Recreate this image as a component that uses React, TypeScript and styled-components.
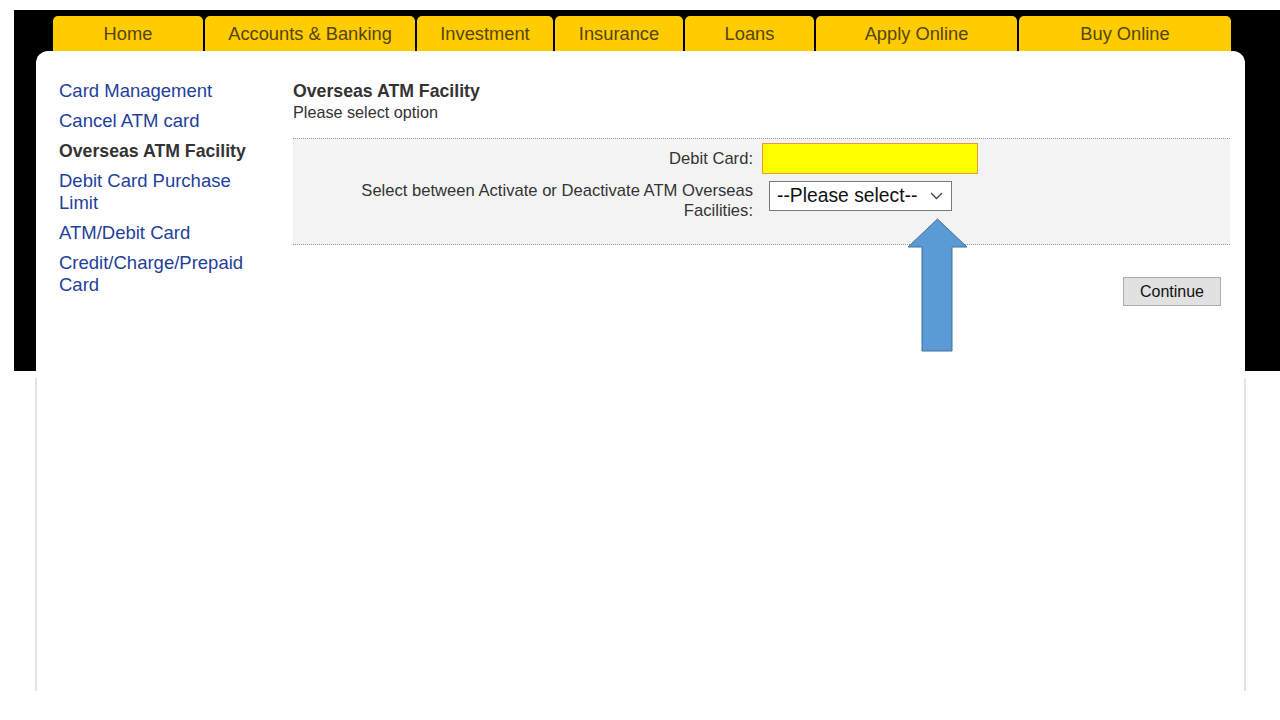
import React from "react";
import styled, { createGlobalStyle } from "styled-components";

const GlobalStyle = createGlobalStyle`
  html, body {
    margin: 0;
    padding: 0;
    background: #ffffff;
    font-family: "Liberation Sans", Arial, sans-serif;
  }
`;

const Page = styled.div`
  position: relative;
  width: 1280px;
  height: 720px;
  overflow: hidden;
  background: #ffffff;
`;

const Frame = styled.div`
  margin: 10px 0 0 14px;
  width: 1266px;
  height: 361px;
  background: #000000;
  box-sizing: border-box;
  padding-top: 6px;
  display: flex;
  flex-direction: column;
`;

const TabBar = styled.nav`
  margin-left: 39px;
  display: flex;
  gap: 2px;
  height: 35px;
`;

const Tab = styled.a<{ $w: number }>`
  width: ${(p) => p.$w}px;
  height: 35px;
  background: #ffcc00;
  border-radius: 5px 5px 0 0;
  display: flex;
  align-items: center;
  justify-content: center;
  color: #54450f;
  font-size: 18.3px;
  text-decoration: none;
  padding-top: 1px;
  box-sizing: border-box;
`;

const Panel = styled.div`
  margin-left: 22px;
  width: 1209px;
  flex: 1;
  background: #ffffff;
  border-radius: 12px 12px 0 0;
  box-sizing: border-box;
  padding: 29px 15px 0 23px;
  display: flex;
  gap: 34px;
`;

const Sidebar = styled.ul`
  list-style: none;
  margin: 0;
  padding: 0;
  width: 200px;
  flex: none;
  display: flex;
  flex-direction: column;
  gap: 8px;
`;

const SideItem = styled.li<{ $active?: boolean }>`
  font-size: ${(p) => (p.$active ? "17.7px" : "18.5px")};
  line-height: 22px;
  font-weight: ${(p) => (p.$active ? 700 : 400)};
  color: ${(p) => (p.$active ? "#333333" : "#1f3f9c")};
`;

const Main = styled.div`
  flex: 1;
  display: flex;
  flex-direction: column;
`;

const Heading = styled.h2`
  margin: 0;
  font-size: 17.7px;
  line-height: 22px;
  font-weight: 700;
  color: #333333;
`;

const Subtitle = styled.p`
  margin: 0;
  font-size: 16.2px;
  line-height: 20px;
  color: #333333;
`;

const FormBox = styled.div`
  margin-top: 16px;
  background: #f3f3f3;
  border-top: 1px dotted #9a9a9a;
  border-bottom: 1px dotted #9a9a9a;
  padding: 4px 0 23px;
  display: flex;
  flex-direction: column;
  gap: 7px;
`;

const FormRow = styled.div<{ $align: "center" | "flex-start" }>`
  display: grid;
  grid-template-columns: 460px auto;
  column-gap: 9px;
  align-items: ${(p) => p.$align};
`;

const Label = styled.label`
  padding-left: 20px;
  text-align: right;
  font-size: 16.6px;
  line-height: 20px;
  color: #333333;
`;

const DebitInput = styled.div`
  width: 216px;
  height: 31px;
  box-sizing: border-box;
  background: #ffff00;
  border: 1px solid #e39b3c;
`;

const SelectBox = styled.div`
  margin-left: 7px;
  width: 183px;
  height: 30px;
  box-sizing: border-box;
  background: #ffffff;
  border: 1px solid #7a7a7a;
  display: flex;
  align-items: center;
  justify-content: space-between;
  padding: 0 8px 0 7px;
  font-size: 19.3px;
  color: #111111;
`;

const Actions = styled.div`
  margin-top: 32px;
  display: flex;
  justify-content: flex-end;
  padding-right: 9px;
`;

const ContinueButton = styled.button`
  width: 98px;
  height: 29px;
  background: #e1e1e1;
  border: 1px solid #adadad;
  font-family: "Liberation Sans", Arial, sans-serif;
  font-size: 16px;
  color: #111111;
  padding: 0;
`;

const Below = styled.div`
  margin: 7px 0 0 35px;
  width: 1211px;
  height: 313px;
  box-sizing: border-box;
  border-left: 2px solid #e4e4e4;
  border-right: 2px solid #e4e4e4;
`;

const ArrowMark = styled.svg`
  position: absolute;
  left: 906px;
  top: 217px;
`;

const tabs: [string, number][] = [
  ["Home", 150],
  ["Accounts & Banking", 210],
  ["Investment", 136],
  ["Insurance", 128],
  ["Loans", 129],
  ["Apply Online", 201],
  ["Buy Online", 212],
];

const sideItems: [string, boolean][] = [
  ["Card Management", false],
  ["Cancel ATM card", false],
  ["Overseas ATM Facility", true],
  ["Debit Card Purchase Limit", false],
  ["ATM/Debit Card", false],
  ["Credit/Charge/Prepaid Card", false],
];

export default function App() {
  return (
    <>
      <GlobalStyle />
      <Page>
        <Frame>
          <TabBar>
            {tabs.map(([t, w]) => (
              <Tab key={t} $w={w}>
                {t}
              </Tab>
            ))}
          </TabBar>
          <Panel>
            <Sidebar>
              {sideItems.map(([t, a]) => (
                <SideItem key={t} $active={a}>
                  {t}
                </SideItem>
              ))}
            </Sidebar>
            <Main>
              <Heading>Overseas ATM Facility</Heading>
              <Subtitle>Please select option</Subtitle>
              <FormBox>
                <FormRow $align="center">
                  <Label>Debit Card:</Label>
                  <DebitInput />
                </FormRow>
                <FormRow $align="flex-start">
                  <Label>Select between Activate or Deactivate ATM Overseas Facilities:</Label>
                  <SelectBox>
                    <span>--Please select--</span>
                    <svg width="13" height="8" viewBox="0 0 13 8">
                      <polyline points="1,1 6.5,6.5 12,1" fill="none" stroke="#444" strokeWidth="1.3" />
                    </svg>
                  </SelectBox>
                </FormRow>
              </FormBox>
              <Actions>
                <ContinueButton>Continue</ContinueButton>
              </Actions>
            </Main>
          </Panel>
        </Frame>
        <Below />
        <ArrowMark width="64" height="137" viewBox="0 0 64 137">
          <polygon
            points="31.5,2 61,30 46,30 46,134 16,134 16,30 2,30"
            fill="#5b9bd5"
            stroke="#41719c"
            strokeWidth="1"
          />
        </ArrowMark>
      </Page>
    </>
  );
}
